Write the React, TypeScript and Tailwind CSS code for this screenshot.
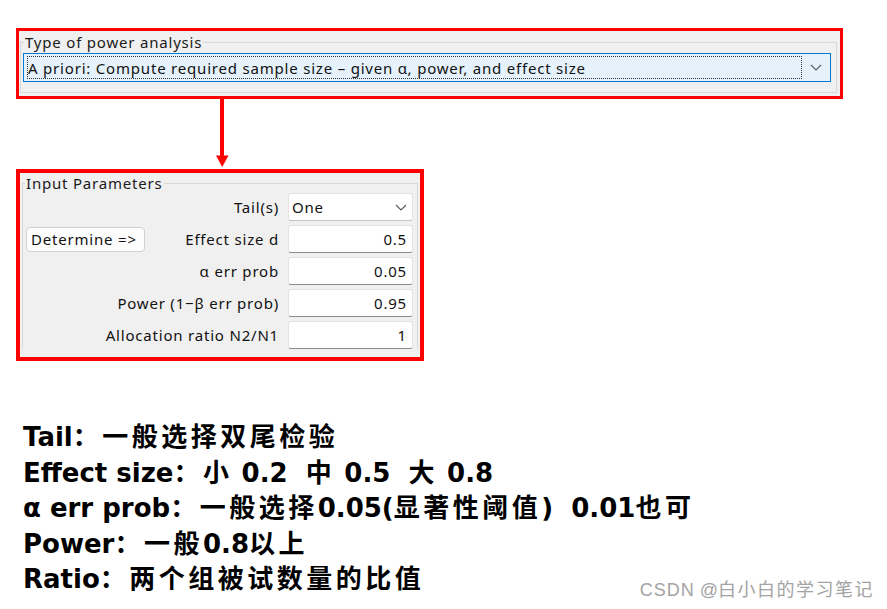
import React from "react";

function Chevron({ className }: { className?: string }) {
  return (
    <svg width="12" height="7" viewBox="0 0 12 7" className={className}>
      <polyline points="1,1 6,6 11,1" fill="none" stroke="#5a5a5a" strokeWidth="1.1" />
    </svg>
  );
}

function Field({ value }: { value: string }) {
  return (
    <div className="shrink-0 w-[125px] h-[28px] bg-white border border-[#e3e3e3] border-b-[#8c8c8c] rounded-[3px] flex items-center justify-end pr-[5px] text-[15px] text-[#111]">
      {value}
    </div>
  );
}

function C({ children }: { children: React.ReactNode }) {
  return <span className="tracking-[3.5px]">{children}</span>;
}

export default function App() {
  const rows: { label: string; control: React.ReactNode; left?: React.ReactNode }[] = [
    {
      label: "Tail(s)",
      control: (
        <div className="shrink-0 w-[125px] h-[28px] bg-white border border-[#e3e3e3] border-b-[#c4c4c4] rounded-[3px] flex items-center justify-between pl-[3px] pr-[5px] text-[15px] text-[#111]">
          <span>One</span>
          <Chevron />
        </div>
      ),
    },
    {
      label: "Effect size d",
      control: <Field value="0.5" />,
      left: (
        <div className="shrink-0 w-[119px] h-[25px] bg-[#fdfdfd] border border-[#d0d0d0] rounded-[4px] flex items-center pl-[4px] text-[15px] text-[#111] whitespace-nowrap">
          Determine =&gt;
        </div>
      ),
    },
    { label: "α err prob", control: <Field value="0.05" /> },
    { label: "Power (1−β err prob)", control: <Field value="0.95" /> },
    { label: "Allocation ratio N2/N1", control: <Field value="1" /> },
  ];

  return (
    <div className="relative w-[887px] h-[609px] bg-white overflow-hidden font-['Noto_Sans','Noto_Sans_CJK_SC',sans-serif]">
      {/* Type of power analysis */}
      <div className="ml-[16px] mt-[28px] w-[827px] h-[71px] border-[3px] border-[#ff0000] bg-[#f0f0f0] flex flex-col tracking-[0.8px]">
        <fieldset className="mt-[2px] ml-[1px] mr-[3px] border border-[#d9d9d9] pb-[10px] min-w-0">
          <legend className="ml-[3px] px-[1px] text-[15px] leading-[18px] text-[#1a1a1a]">
            Type of power analysis
          </legend>
          <div className="mt-[2px] ml-[2px] mr-[5px] h-[29px] border border-[#0078d7] bg-[#e5f1fb] flex items-center pl-[3px]">
            <div className="flex-1 h-[23px] border border-dotted border-[#333] flex items-center text-[15px] leading-[18px] text-[#111] whitespace-nowrap">
              A priori: Compute required sample size – given α, power, and effect size
            </div>
            <div className="w-[28px] flex justify-center">
              <Chevron />
            </div>
          </div>
        </fieldset>
      </div>

      {/* Arrow */}
      <svg width="887" height="70" className="block">
        <rect x="220" y="0" width="4" height="58" fill="#ff0000" />
        <polygon points="216,56.5 228.5,56.5 222.2,68" fill="#ff0000" />
      </svg>

      {/* Input Parameters */}
      <div className="ml-[16px] w-[408px] h-[192px] border-4 border-[#ff0000] bg-[#f0f0f0] tracking-[0.8px]">
        <fieldset className="mt-[1px] ml-[2px] mr-[2px] border border-b-0 border-[#d9d9d9] min-w-0">
          <legend className="ml-[2px] px-[1px] text-[15px] leading-[18px] text-[#1a1a1a]">
            Input Parameters
          </legend>
          <div className="flex flex-col gap-[4px] mt-[1px] pl-[3px] pr-[4px]">
            {rows.map((r) => (
              <div key={r.label} className="flex items-center h-[28px]">
                {r.left}
                <div className="flex-1 text-right pr-[9px] text-[15px] text-[#111] whitespace-nowrap">
                  {r.label}
                </div>
                {r.control}
              </div>
            ))}
          </div>
        </fieldset>
      </div>

      {/* Notes */}
      <div className="mt-[59px] ml-[23px] font-bold text-[26px] leading-[35.5px] text-black whitespace-pre font-['DejaVu_Sans','Noto_Sans_CJK_SC',sans-serif]">
        <div>
          Tail<C>：一般选择双尾检验</C>
        </div>
        <div>
          Effect size<C>：小</C> 0.2  <C>中</C> 0.5  <C>大</C> 0.8
        </div>
        <div>
          α err prob<C>：一般选择</C>0.05(<C>显著性阈值</C>)  0.01<C>也可</C>
        </div>
        <div>
          Power<C>：一般</C>0.8<C>以上</C>
        </div>
        <div>
          Ratio<C>：两个组被试数量的比值</C>
        </div>
      </div>

      {/* Watermark */}
      <div className="absolute right-[13px] bottom-[8px] text-[18px] leading-[22px] text-[#a3a3a3] font-['Liberation_Sans','Noto_Sans_CJK_SC',sans-serif] whitespace-nowrap">
        <span className="tracking-[1px]">CSDN</span> @<span className="tracking-[1.5px]">白小白的学习笔记</span>
      </div>
    </div>
  );
}
